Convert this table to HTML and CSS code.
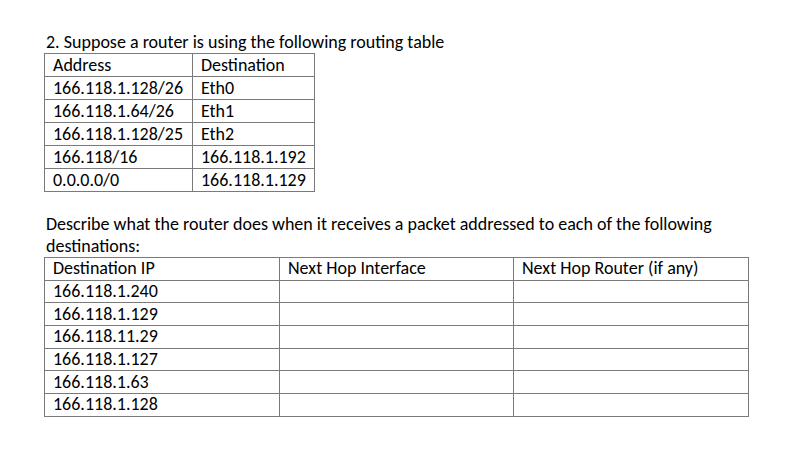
FILE: index.html
```html
<!DOCTYPE html>
<html>
<head>
<meta charset="utf-8">
<link rel="stylesheet" href="styles.css">
</head>
<body>
<div class="page">
  <p class="line title">2. Suppose a router is using the following routing table</p>
  <table class="grid routing">
    <colgroup><col class="c1"><col class="c2"></colgroup>
    <tr><td>Address</td><td>Destination</td></tr>
    <tr><td>166.118.1.128/26</td><td>Eth0</td></tr>
    <tr><td>166.118.1.64/26</td><td>Eth1</td></tr>
    <tr><td>166.118.1.128/25</td><td>Eth2</td></tr>
    <tr><td>166.118/16</td><td>166.118.1.192</td></tr>
    <tr><td>0.0.0.0/0</td><td>166.118.1.129</td></tr>
  </table>
  <p class="line desc">Describe what the router does when it receives a packet addressed to each of the following destinations:</p>
  <table class="grid answers">
    <colgroup><col class="a1"><col class="a2"><col class="a3"></colgroup>
    <tr><td>Destination IP</td><td>Next Hop Interface</td><td>Next Hop Router (if any)</td></tr>
    <tr><td>166.118.1.240</td><td></td><td></td></tr>
    <tr><td>166.118.1.129</td><td></td><td></td></tr>
    <tr><td>166.118.11.29</td><td></td><td></td></tr>
    <tr><td>166.118.1.127</td><td></td><td></td></tr>
    <tr><td>166.118.1.63</td><td></td><td></td></tr>
    <tr><td>166.118.1.128</td><td></td><td></td></tr>
  </table>
</div>
</body>
</html>
```
FILE: styles.css
```css
html, body {
  margin: 0;
  padding: 0;
  background: #fff;
}
body {
  font-family: Carlito, "Open Sans", "Liberation Sans", sans-serif;
  font-size: 18px;
  color: #000;
}
.page {
  padding: 31px 0 0 44px;
}
.line {
  margin: 0;
  line-height: 22px;
  padding-left: 2px;
}
.desc {
  width: 700px;
  margin-top: 21px;
}
.grid {
  border-collapse: collapse;
  table-layout: fixed;
}
.grid td {
  border: 1px solid #7a7a7a;
  height: 23px;
  padding: 0 0 0 8px;
  line-height: 21px;
  white-space: nowrap;
  overflow: hidden;
  box-sizing: border-box;
}
.routing { width: 270px; }
.routing .c1 { width: 148px; }
.routing .c2 { width: 122px; }
.answers { width: 704px; }
.answers .a1 { width: 235px; }
.answers .a2 { width: 234px; }
.answers .a3 { width: 235px; }
.answers td { height: 22.7px; }
```
